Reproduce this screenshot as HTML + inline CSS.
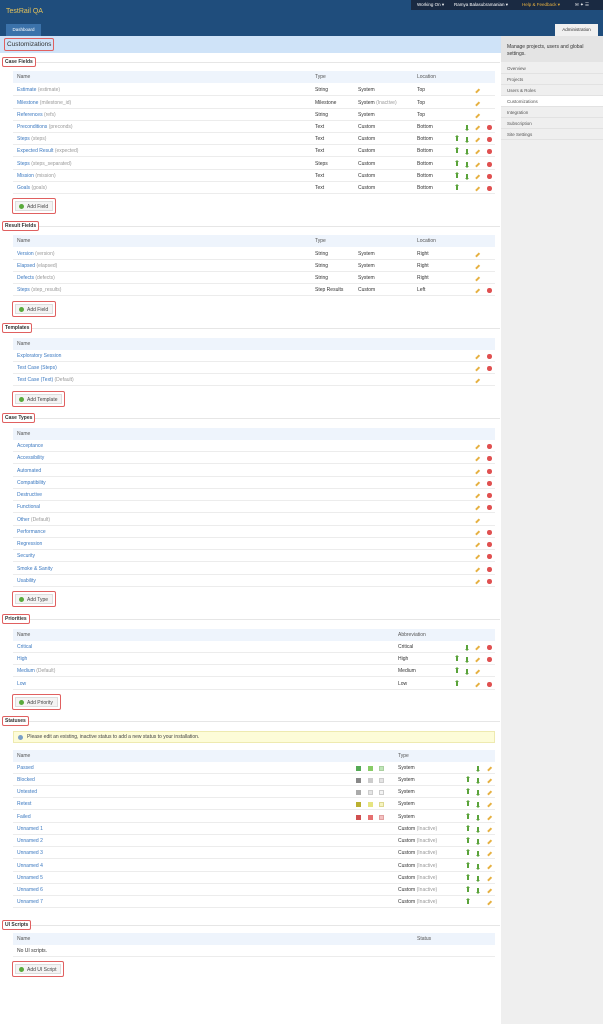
<!DOCTYPE html>
<html><head><meta charset="utf-8"><style>
*{margin:0;padding:0;box-sizing:border-box}
body{width:603px;height:1024px;position:relative;background:#fff;font-family:"Liberation Sans",sans-serif;font-size:5px;color:#333;overflow:hidden}
.a{position:absolute}
.hdr{left:0;top:0;width:603px;height:36px;background:#1f4d7c}
.tb{left:411px;top:0;width:192px;height:10px;background:#1a2a42;color:#fff;font-size:4.5px;line-height:10px}
.r{position:absolute;left:13px;width:482px;height:12px;line-height:12px;border-bottom:1px solid #ececec}
.r a{color:#3a78c0;text-decoration:none;padding-left:4px}
.r i{font-style:normal;color:#999}
.r span{position:absolute;top:0}
.h{background:#eef4fc;color:#555;border-bottom:none}
.h b{font-weight:normal;padding-left:4px}
.sec{position:absolute;left:2px;height:10px;line-height:8px;border:1px solid #e06060;border-radius:2px;padding:0 2px;font-weight:bold;font-size:5px;color:#333;background:#fff}
.ln{position:absolute;left:2px;width:498px;height:1px;background:#e6e6e6}
.btn{position:absolute;left:12px;height:16px;border:1px solid #e06060;border-radius:2px;padding:2px}
.btn div{height:10px;line-height:10px;background:#f4f4f4;border:1px solid #ddd;padding:0 4px 0 11px;position:relative;color:#444;white-space:nowrap}
.btn div:before{content:"";position:absolute;left:3px;top:2px;width:5px;height:5px;border-radius:50%;background:#5aaa3c}
.r span.u,.r span.d{top:4px;width:1.5px;height:4px;background:#5aa33a}
.r span.u:before,.r span.d:before{content:"";position:absolute;left:-1.25px;border-left:2px solid transparent;border-right:2px solid transparent}
.r span.u:before{top:-2px;border-bottom:2px solid #5aa33a}
.r span.d{top:4px}.r span.d:before{bottom:-2px;border-top:2px solid #5aa33a}
.r span.e{top:5.5px;width:5px;height:1.5px;background:#e6b040;transform:rotate(-45deg)}
.r span.x{top:4px;width:4.5px;height:4.5px;border-radius:50%;background:#e05050}
.r span.sq{top:3.5px;width:5px;height:5px}
.sb{left:501px;top:36px;width:102px;height:988px;background:#efefef}
.m{position:absolute;left:501px;width:102px;height:11px;line-height:11px;padding-left:6px;font-size:4.5px;color:#555;border-bottom:1px solid #e2e2e2}
</style></head><body>
<div class="a hdr"></div>
<div class="a" style="left:6px;top:8px;color:#e6c35a;font-size:7px">TestRail QA</div>
<div class="a tb"><span style="position:absolute;left:6px">Working On ▾</span><span style="position:absolute;left:43px">Ramya Balasubramanian ▾</span><span style="position:absolute;left:111px;color:#e6b040">Help &amp; Feedback ▾</span><span style="position:absolute;left:164px">✉ ✦ ☰</span></div>
<div class="a" style="left:6px;top:24px;width:35px;height:12px;background:#3b72aa;color:#fff;font-size:4.5px;line-height:12px;text-align:center">Dashboard</div>
<div class="a" style="left:555px;top:24px;width:43px;height:12px;background:#f0f0f0;color:#333;font-size:4.5px;line-height:12px;text-align:center">Administration</div>
<div class="a" style="left:0;top:36px;width:501px;height:17px;background:#cfe3f8"></div>
<div class="a" style="left:4px;top:38px;height:13px;border:1px solid #e06060;border-radius:2px;padding:0 2px;line-height:11px;font-size:6.5px;color:#333">Customizations</div>
<div class="a sb"></div>
<div class="a" style="left:501px;top:36px;width:102px;height:26px;background:#e4e4e4;padding:8px 6px 0 6px;font-size:5px;line-height:6.5px;color:#333">Manage projects, users and global settings.</div>
<div class="m" style="top:63px">Overview</div><div class="m" style="top:74px">Projects</div><div class="m" style="top:85px">Users &amp; Roles</div><div class="m" style="top:96px;background:#fff">Customizations</div><div class="m" style="top:107px">Integration</div><div class="m" style="top:118px">Subscription</div><div class="m" style="top:129px">Site Settings</div>

<!-- Case Fields -->
<div class="ln" style="top:62px"></div><div class="sec" style="top:57px">Case Fields</div>
<div class="r h" style="top:71px"><b>Name</b><span style="left:302px">Type</span><span style="left:404px">Location</span></div>
<div class="r" style="top:84px"><a>Estimate</a> <i>(estimate)</i><span style="left:302px">String</span><span style="left:345px">System</span><span style="left:404px">Top</span><span class="e" style="left:462px"></span></div>
<div class="r" style="top:97px"><a>Milestone</a> <i>(milestone_id)</i><span style="left:302px">Milestone</span><span style="left:345px">System <i>(Inactive)</i></span><span style="left:404px">Top</span><span class="e" style="left:462px"></span></div>
<div class="r" style="top:109px"><a>References</a> <i>(refs)</i><span style="left:302px">String</span><span style="left:345px">System</span><span style="left:404px">Top</span><span class="e" style="left:462px"></span></div>
<div class="r" style="top:121px"><a>Preconditions</a> <i>(preconds)</i><span style="left:302px">Text</span><span style="left:345px">Custom</span><span style="left:404px">Bottom</span><span class="d" style="left:453px"></span><span class="e" style="left:462px"></span><span class="x" style="left:474px"></span></div>
<div class="r" style="top:133px"><a>Steps</a> <i>(steps)</i><span style="left:302px">Text</span><span style="left:345px">Custom</span><span style="left:404px">Bottom</span><span class="u" style="left:443px"></span><span class="d" style="left:453px"></span><span class="e" style="left:462px"></span><span class="x" style="left:474px"></span></div>
<div class="r" style="top:145px"><a>Expected Result</a> <i>(expected)</i><span style="left:302px">Text</span><span style="left:345px">Custom</span><span style="left:404px">Bottom</span><span class="u" style="left:443px"></span><span class="d" style="left:453px"></span><span class="e" style="left:462px"></span><span class="x" style="left:474px"></span></div>
<div class="r" style="top:158px"><a>Steps</a> <i>(steps_separated)</i><span style="left:302px">Steps</span><span style="left:345px">Custom</span><span style="left:404px">Bottom</span><span class="u" style="left:443px"></span><span class="d" style="left:453px"></span><span class="e" style="left:462px"></span><span class="x" style="left:474px"></span></div>
<div class="r" style="top:170px"><a>Mission</a> <i>(mission)</i><span style="left:302px">Text</span><span style="left:345px">Custom</span><span style="left:404px">Bottom</span><span class="u" style="left:443px"></span><span class="d" style="left:453px"></span><span class="e" style="left:462px"></span><span class="x" style="left:474px"></span></div>
<div class="r" style="top:182px"><a>Goals</a> <i>(goals)</i><span style="left:302px">Text</span><span style="left:345px">Custom</span><span style="left:404px">Bottom</span><span class="u" style="left:443px"></span><span class="e" style="left:462px"></span><span class="x" style="left:474px"></span></div>
<div class="btn" style="top:198px"><div>Add Field</div></div>

<!-- Result Fields -->
<div class="ln" style="top:226px"></div><div class="sec" style="top:221px">Result Fields</div>
<div class="r h" style="top:235px"><b>Name</b><span style="left:302px">Type</span><span style="left:404px">Location</span></div>
<div class="r" style="top:248px"><a>Version</a> <i>(version)</i><span style="left:302px">String</span><span style="left:345px">System</span><span style="left:404px">Right</span><span class="e" style="left:462px"></span></div>
<div class="r" style="top:260px"><a>Elapsed</a> <i>(elapsed)</i><span style="left:302px">String</span><span style="left:345px">System</span><span style="left:404px">Right</span><span class="e" style="left:462px"></span></div>
<div class="r" style="top:272px"><a>Defects</a> <i>(defects)</i><span style="left:302px">String</span><span style="left:345px">System</span><span style="left:404px">Right</span><span class="e" style="left:462px"></span></div>
<div class="r" style="top:284px"><a>Steps</a> <i>(step_results)</i><span style="left:302px">Step Results</span><span style="left:345px">Custom</span><span style="left:404px">Left</span><span class="e" style="left:462px"></span><span class="x" style="left:474px"></span></div>
<div class="btn" style="top:301px"><div>Add Field</div></div>

<!-- Templates -->
<div class="ln" style="top:328px"></div><div class="sec" style="top:323px">Templates</div>
<div class="r h" style="top:338px"><b>Name</b></div>
<div class="r" style="top:350px"><a>Exploratory Session</a><span class="e" style="left:462px"></span><span class="x" style="left:474px"></span></div>
<div class="r" style="top:362px"><a>Test Case (Steps)</a><span class="e" style="left:462px"></span><span class="x" style="left:474px"></span></div>
<div class="r" style="top:374px"><a>Test Case (Text)</a> <i>(Default)</i><span class="e" style="left:462px"></span></div>
<div class="btn" style="top:391px"><div>Add Template</div></div>

<!-- Case Types -->
<div class="ln" style="top:418px"></div><div class="sec" style="top:413px">Case Types</div>
<div class="r h" style="top:428px"><b>Name</b></div>
<div class="r" style="top:440px"><a>Acceptance</a><span class="e" style="left:462px"></span><span class="x" style="left:474px"></span></div>
<div class="r" style="top:452px"><a>Accessibility</a><span class="e" style="left:462px"></span><span class="x" style="left:474px"></span></div>
<div class="r" style="top:465px"><a>Automated</a><span class="e" style="left:462px"></span><span class="x" style="left:474px"></span></div>
<div class="r" style="top:477px"><a>Compatibility</a><span class="e" style="left:462px"></span><span class="x" style="left:474px"></span></div>
<div class="r" style="top:489px"><a>Destructive</a><span class="e" style="left:462px"></span><span class="x" style="left:474px"></span></div>
<div class="r" style="top:501px"><a>Functional</a><span class="e" style="left:462px"></span><span class="x" style="left:474px"></span></div>
<div class="r" style="top:514px"><a>Other</a> <i>(Default)</i><span class="e" style="left:462px"></span></div>
<div class="r" style="top:526px"><a>Performance</a><span class="e" style="left:462px"></span><span class="x" style="left:474px"></span></div>
<div class="r" style="top:538px"><a>Regression</a><span class="e" style="left:462px"></span><span class="x" style="left:474px"></span></div>
<div class="r" style="top:550px"><a>Security</a><span class="e" style="left:462px"></span><span class="x" style="left:474px"></span></div>
<div class="r" style="top:563px"><a>Smoke &amp; Sanity</a><span class="e" style="left:462px"></span><span class="x" style="left:474px"></span></div>
<div class="r" style="top:575px"><a>Usability</a><span class="e" style="left:462px"></span><span class="x" style="left:474px"></span></div>
<div class="btn" style="top:591px"><div>Add Type</div></div>

<!-- Priorities -->
<div class="ln" style="top:619px"></div><div class="sec" style="top:614px">Priorities</div>
<div class="r h" style="top:629px"><b>Name</b><span style="left:385px">Abbreviation</span></div>
<div class="r" style="top:641px"><a>Critical</a><span style="left:385px">Critical</span><span class="d" style="left:453px"></span><span class="e" style="left:462px"></span><span class="x" style="left:474px"></span></div>
<div class="r" style="top:653px"><a>High</a><span style="left:385px">High</span><span class="u" style="left:443px"></span><span class="d" style="left:453px"></span><span class="e" style="left:462px"></span><span class="x" style="left:474px"></span></div>
<div class="r" style="top:665px"><a>Medium</a> <i>(Default)</i><span style="left:385px">Medium</span><span class="u" style="left:443px"></span><span class="d" style="left:453px"></span><span class="e" style="left:462px"></span></div>
<div class="r" style="top:678px"><a>Low</a><span style="left:385px">Low</span><span class="u" style="left:443px"></span><span class="e" style="left:462px"></span><span class="x" style="left:474px"></span></div>
<div class="btn" style="top:694px"><div>Add Priority</div></div>

<!-- Statuses -->
<div class="ln" style="top:721px"></div><div class="sec" style="top:716px">Statuses</div>
<div class="a" style="left:13px;top:731px;width:482px;height:12px;background:#fdfcd8;border:1px solid #eeeab0;line-height:10px;padding-left:13px;color:#444">Please edit an existing, inactive status to add a new status to your installation.<span style="position:absolute;left:4px;top:3px;width:5px;height:5px;border-radius:50%;background:#7aa0c8"></span></div>
<div class="r h" style="top:750px"><b>Name</b><span style="left:385px">Type</span></div>
<div class="r" style="top:762px"><a>Passed</a><span class="sq" style="left:343px;background:#55aa55"></span><span class="sq" style="left:355px;background:#88cc66"></span><span class="sq" style="left:366px;background:#bfe6b8;border:1px solid #aad0a0"></span><span style="left:385px">System</span><span class="d" style="left:464px"></span><span class="e" style="left:474px"></span></div>
<div class="r" style="top:774px"><a>Blocked</a><span class="sq" style="left:343px;background:#888"></span><span class="sq" style="left:355px;background:#ccc"></span><span class="sq" style="left:366px;background:#e4e4e4;border:1px solid #ccc"></span><span style="left:385px">System</span><span class="u" style="left:454px"></span><span class="d" style="left:464px"></span><span class="e" style="left:474px"></span></div>
<div class="r" style="top:786px"><a>Untested</a><span class="sq" style="left:343px;background:#aaa"></span><span class="sq" style="left:355px;background:#e4e4e4;border:1px solid #ccc"></span><span class="sq" style="left:366px;background:#f4f4f4;border:1px solid #ccc"></span><span style="left:385px">System</span><span class="u" style="left:454px"></span><span class="d" style="left:464px"></span><span class="e" style="left:474px"></span></div>
<div class="r" style="top:798px"><a>Retest</a><span class="sq" style="left:343px;background:#bbb030"></span><span class="sq" style="left:355px;background:#e6e480"></span><span class="sq" style="left:366px;background:#f6f4c0;border:1px solid #ddd890"></span><span style="left:385px">System</span><span class="u" style="left:454px"></span><span class="d" style="left:464px"></span><span class="e" style="left:474px"></span></div>
<div class="r" style="top:811px"><a>Failed</a><span class="sq" style="left:343px;background:#d05050"></span><span class="sq" style="left:355px;background:#e67070"></span><span class="sq" style="left:366px;background:#f4c0c0;border:1px solid #e0a0a0"></span><span style="left:385px">System</span><span class="u" style="left:454px"></span><span class="d" style="left:464px"></span><span class="e" style="left:474px"></span></div>
<div class="r" style="top:823px"><a>Unnamed 1</a><span style="left:385px">Custom <i>(Inactive)</i></span><span class="u" style="left:454px"></span><span class="d" style="left:464px"></span><span class="e" style="left:474px"></span></div>
<div class="r" style="top:835px"><a>Unnamed 2</a><span style="left:385px">Custom <i>(Inactive)</i></span><span class="u" style="left:454px"></span><span class="d" style="left:464px"></span><span class="e" style="left:474px"></span></div>
<div class="r" style="top:847px"><a>Unnamed 3</a><span style="left:385px">Custom <i>(Inactive)</i></span><span class="u" style="left:454px"></span><span class="d" style="left:464px"></span><span class="e" style="left:474px"></span></div>
<div class="r" style="top:860px"><a>Unnamed 4</a><span style="left:385px">Custom <i>(Inactive)</i></span><span class="u" style="left:454px"></span><span class="d" style="left:464px"></span><span class="e" style="left:474px"></span></div>
<div class="r" style="top:872px"><a>Unnamed 5</a><span style="left:385px">Custom <i>(Inactive)</i></span><span class="u" style="left:454px"></span><span class="d" style="left:464px"></span><span class="e" style="left:474px"></span></div>
<div class="r" style="top:884px"><a>Unnamed 6</a><span style="left:385px">Custom <i>(Inactive)</i></span><span class="u" style="left:454px"></span><span class="d" style="left:464px"></span><span class="e" style="left:474px"></span></div>
<div class="r" style="top:896px"><a>Unnamed 7</a><span style="left:385px">Custom <i>(Inactive)</i></span><span class="u" style="left:454px"></span><span class="e" style="left:474px"></span></div>

<!-- UI Scripts -->
<div class="ln" style="top:925px"></div><div class="sec" style="top:920px">UI Scripts</div>
<div class="r h" style="top:933px"><b>Name</b><span style="left:404px">Status</span></div>
<div class="r" style="top:945px"><span style="left:4px">No UI scripts.</span></div>
<div class="btn" style="top:961px"><div>Add UI Script</div></div>
</body></html>
